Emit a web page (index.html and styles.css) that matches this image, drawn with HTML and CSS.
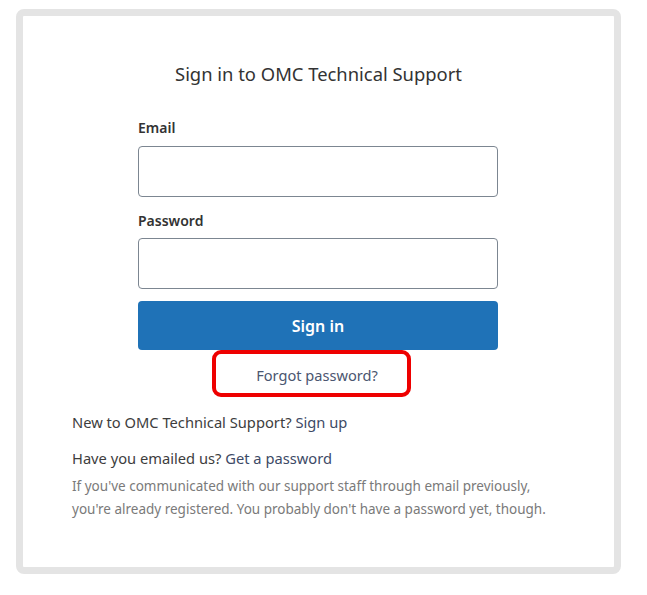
FILE: index.html
```html
<!DOCTYPE html>
<html>
<head>
<meta charset="utf-8">
<link rel="stylesheet" href="styles.css">
</head>
<body>
<div class="frame">
  <h1 class="title">Sign in to OMC Technical Support</h1>
  <form class="form">
    <label class="label label-email">Email</label>
    <div class="input"></div>
    <label class="label label-pass">Password</label>
    <div class="input input-pass"></div>
    <button type="button" class="btn">Sign in</button>
    <div class="forgot"><a class="forgot-link">Forgot password?</a></div>
  </form>
  <div class="extra">
    <p class="line line-new">New to OMC Technical Support? <a>Sign up</a></p>
    <p class="line line-have">Have you emailed us? <a>Get a password</a></p>
    <p class="note">If you've communicated with our support staff through email previously,<br>you're already registered. You probably don't have a password yet, though.</p>
  </div>
</div>
</body>
</html>
```
FILE: styles.css
```css
html, body {
  margin: 0;
  padding: 0;
  background: #ffffff;
}
body {
  font-family: "Noto Sans", "Open Sans", sans-serif;
  color: #333;
}
.frame {
  box-sizing: border-box;
  margin: 9px 0 0 16px;
  width: 605px;
  height: 565px;
  border: 7px solid #e4e4e4;
  border-radius: 8px;
  background: #fff;
}
.title {
  margin: 46px 0 0 0;
  font-size: 18.4px;
  line-height: 24px;
  font-weight: 400;
  text-align: center;
  color: #333;
}
.form {
  width: 360px;
  margin: 0 0 0 115px;
  display: flex;
  flex-direction: column;
}
.label {
  font-size: 14px;
  line-height: 20px;
  font-weight: 600;
  color: #333;
}
.label-email { margin-top: 32px; }
.label-pass { margin-top: 14px; }
.input {
  box-sizing: border-box;
  margin-top: 8px;
  height: 51px;
  border: 1.5px solid #7c8691;
  border-radius: 4px;
  background: #fff;
}
.input-pass { margin-top: 7px; }
.btn {
  margin-top: 12px;
  height: 49px;
  border: 0;
  border-radius: 4px;
  background: #1f72b7;
  color: #fff;
  font-family: inherit;
  font-size: 16px;
  font-weight: 600;
}
.forgot {
  box-sizing: border-box;
  width: 199px;
  height: 47px;
  margin-left: 74px;
  border: 4px solid #ee0000;
  border-radius: 9px;
  display: flex;
  align-items: center;
  justify-content: center;
}
.forgot-link {
  font-size: 14.6px;
  color: #4b5670;
  margin-top: 2px;
  margin-left: 11px;
}
.extra {
  margin: 15px 0 0 49px;
}
.line {
  margin: 0;
  font-size: 14.7px;
  line-height: 20px;
  color: #3d3d3d;
}
.line a { color: #3d4a66; }
.line-have { margin-top: 16px; }
.note {
  margin: 7px 0 0 0;
  font-size: 13.5px;
  line-height: 23px;
  color: #7a7a7a;
}
```
